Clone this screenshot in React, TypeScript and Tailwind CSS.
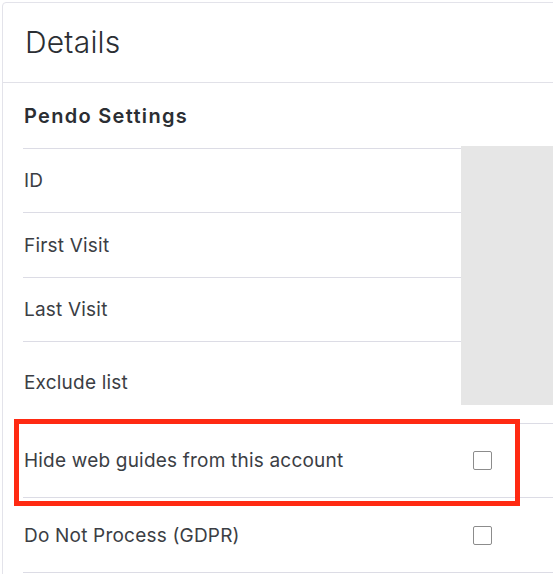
import React from "react";

type Row = {
  label: string;
  height: string;
  checkbox?: boolean;
};

const rows: Row[] = [
  { label: "ID", height: "h-[64px]" },
  { label: "First Visit", height: "h-[65px]" },
  { label: "Last Visit", height: "h-[64px]" },
  { label: "Exclude list", height: "h-[82px]" },
  { label: "Hide web guides from this account", height: "h-[74px]", checkbox: true },
  { label: "Do Not Process (GDPR)", height: "h-[75px]", checkbox: true },
];

const Checkbox = () => (
  <div className="w-[19px] h-[19px] rounded-[2px] border-[1.5px] border-[#8c8c8c] bg-white" />
);

const App = () => {
  return (
    <div
      className="relative w-[553px] h-[574px] overflow-hidden bg-white pl-[2px] pt-[2px]"
      style={{ fontFamily: "Inter, 'Noto Sans', sans-serif" }}
    >
      <div className="w-[620px] h-[700px] rounded-tl-[4px] border border-[#e3e3ea] bg-white">
        <div className="flex items-center h-[80px] px-[22px] border-b border-[#e1e1e8]">
          <h1 className="text-[30px] font-light text-[#2b2e33] tracking-[0.2px]">Details</h1>
        </div>
        <div className="pl-[20px]">
          <div className="flex items-center h-[65px] pt-[1px]">
            <h2 className="pl-[1px] text-[20px] font-semibold text-[#2b2e33] tracking-[1.3px]">
              Pendo Settings
            </h2>
          </div>
          <div className="border-b border-[#dcdce5]">
            {rows.map((row) => (
              <div
                key={row.label}
                className={`flex items-center border-t border-[#dcdce5] ${row.height}`}
              >
                <span className="w-[450px] pl-[1px] pt-[2px] text-[19px] tracking-[0.2px] text-[#3b3e44]">
                  {row.label}
                </span>
                {row.checkbox && <Checkbox />}
              </div>
            ))}
          </div>
        </div>
      </div>

      {/* redacted values */}
      <div className="absolute left-[461px] top-[146px] w-[100px] h-[259px] bg-[#e6e6e6]" />

      {/* highlight annotation */}
      <div className="absolute left-[14px] top-[419px] w-[506px] h-[87px] border-[5px] border-[#ff2a12]" />
    </div>
  );
};

export default App;
